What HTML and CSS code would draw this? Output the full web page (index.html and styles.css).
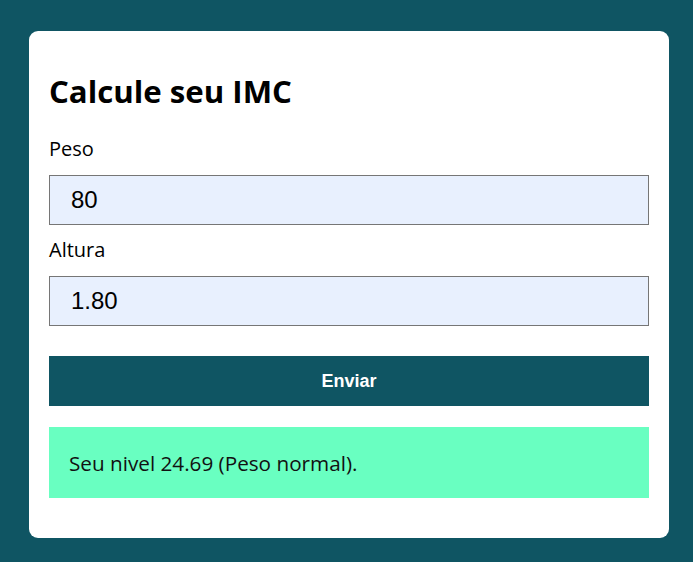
FILE: index.html
```html
<!DOCTYPE html>
<html lang="pt">
<head>
<meta charset="utf-8">
<title>Calcule seu IMC</title>
<link rel="stylesheet" href="styles.css">
</head>
<body>
<main class="card">
  <h1 class="title">Calcule seu IMC</h1>
  <form class="form">
    <label class="label" for="peso">Peso</label>
    <input class="field" id="peso" type="text" value="80">
    <label class="label label-next" for="altura">Altura</label>
    <input class="field" id="altura" type="text" value="1.80">
    <button class="submit" type="button">Enviar</button>
  </form>
  <div class="result">Seu nivel 24.69 (Peso normal).</div>
</main>
</body>
</html>
```

FILE: styles.css
```css
html, body {
  margin: 0;
  padding: 0;
}

body {
  background: #0f5563;
  min-height: 562px;
  padding: 31px 24px 0 29px;
  box-sizing: border-box;
  font-family: "Open Sans", "Noto Sans", sans-serif;
  color: #000;
}

.card {
  width: 640px;
  height: 507px;
  box-sizing: border-box;
  background: #fff;
  border-radius: 9px;
  padding: 40px 20px 20px;
}

.title {
  margin: 0 0 23px;
  font-size: 31.2px;
  font-weight: 700;
  line-height: 41px;
}

.form {
  display: flex;
  flex-direction: column;
}

.label {
  font-size: 20px;
  line-height: 27px;
  margin-bottom: 13px;
}

.label-next {
  margin-top: 11px;
}

.field {
  height: 50px;
  box-sizing: border-box;
  border: 1px solid #767676;
  background: #e8f0fe;
  padding: 0 21px;
  font-family: "Liberation Sans", Arial, sans-serif;
  font-size: 24px;
  color: #000;
  outline: none;
}

.submit {
  margin-top: 30px;
  height: 50px;
  border: none;
  background: #0f5563;
  color: #fff;
  font-family: "Liberation Sans", Arial, sans-serif;
  font-weight: 700;
  font-size: 18px;
}

.result {
  margin-top: 21px;
  height: 71px;
  box-sizing: border-box;
  background: #69ffc1;
  padding: 0 20px;
  display: flex;
  align-items: center;
  font-size: 20.7px;
  color: #111;
}
```
